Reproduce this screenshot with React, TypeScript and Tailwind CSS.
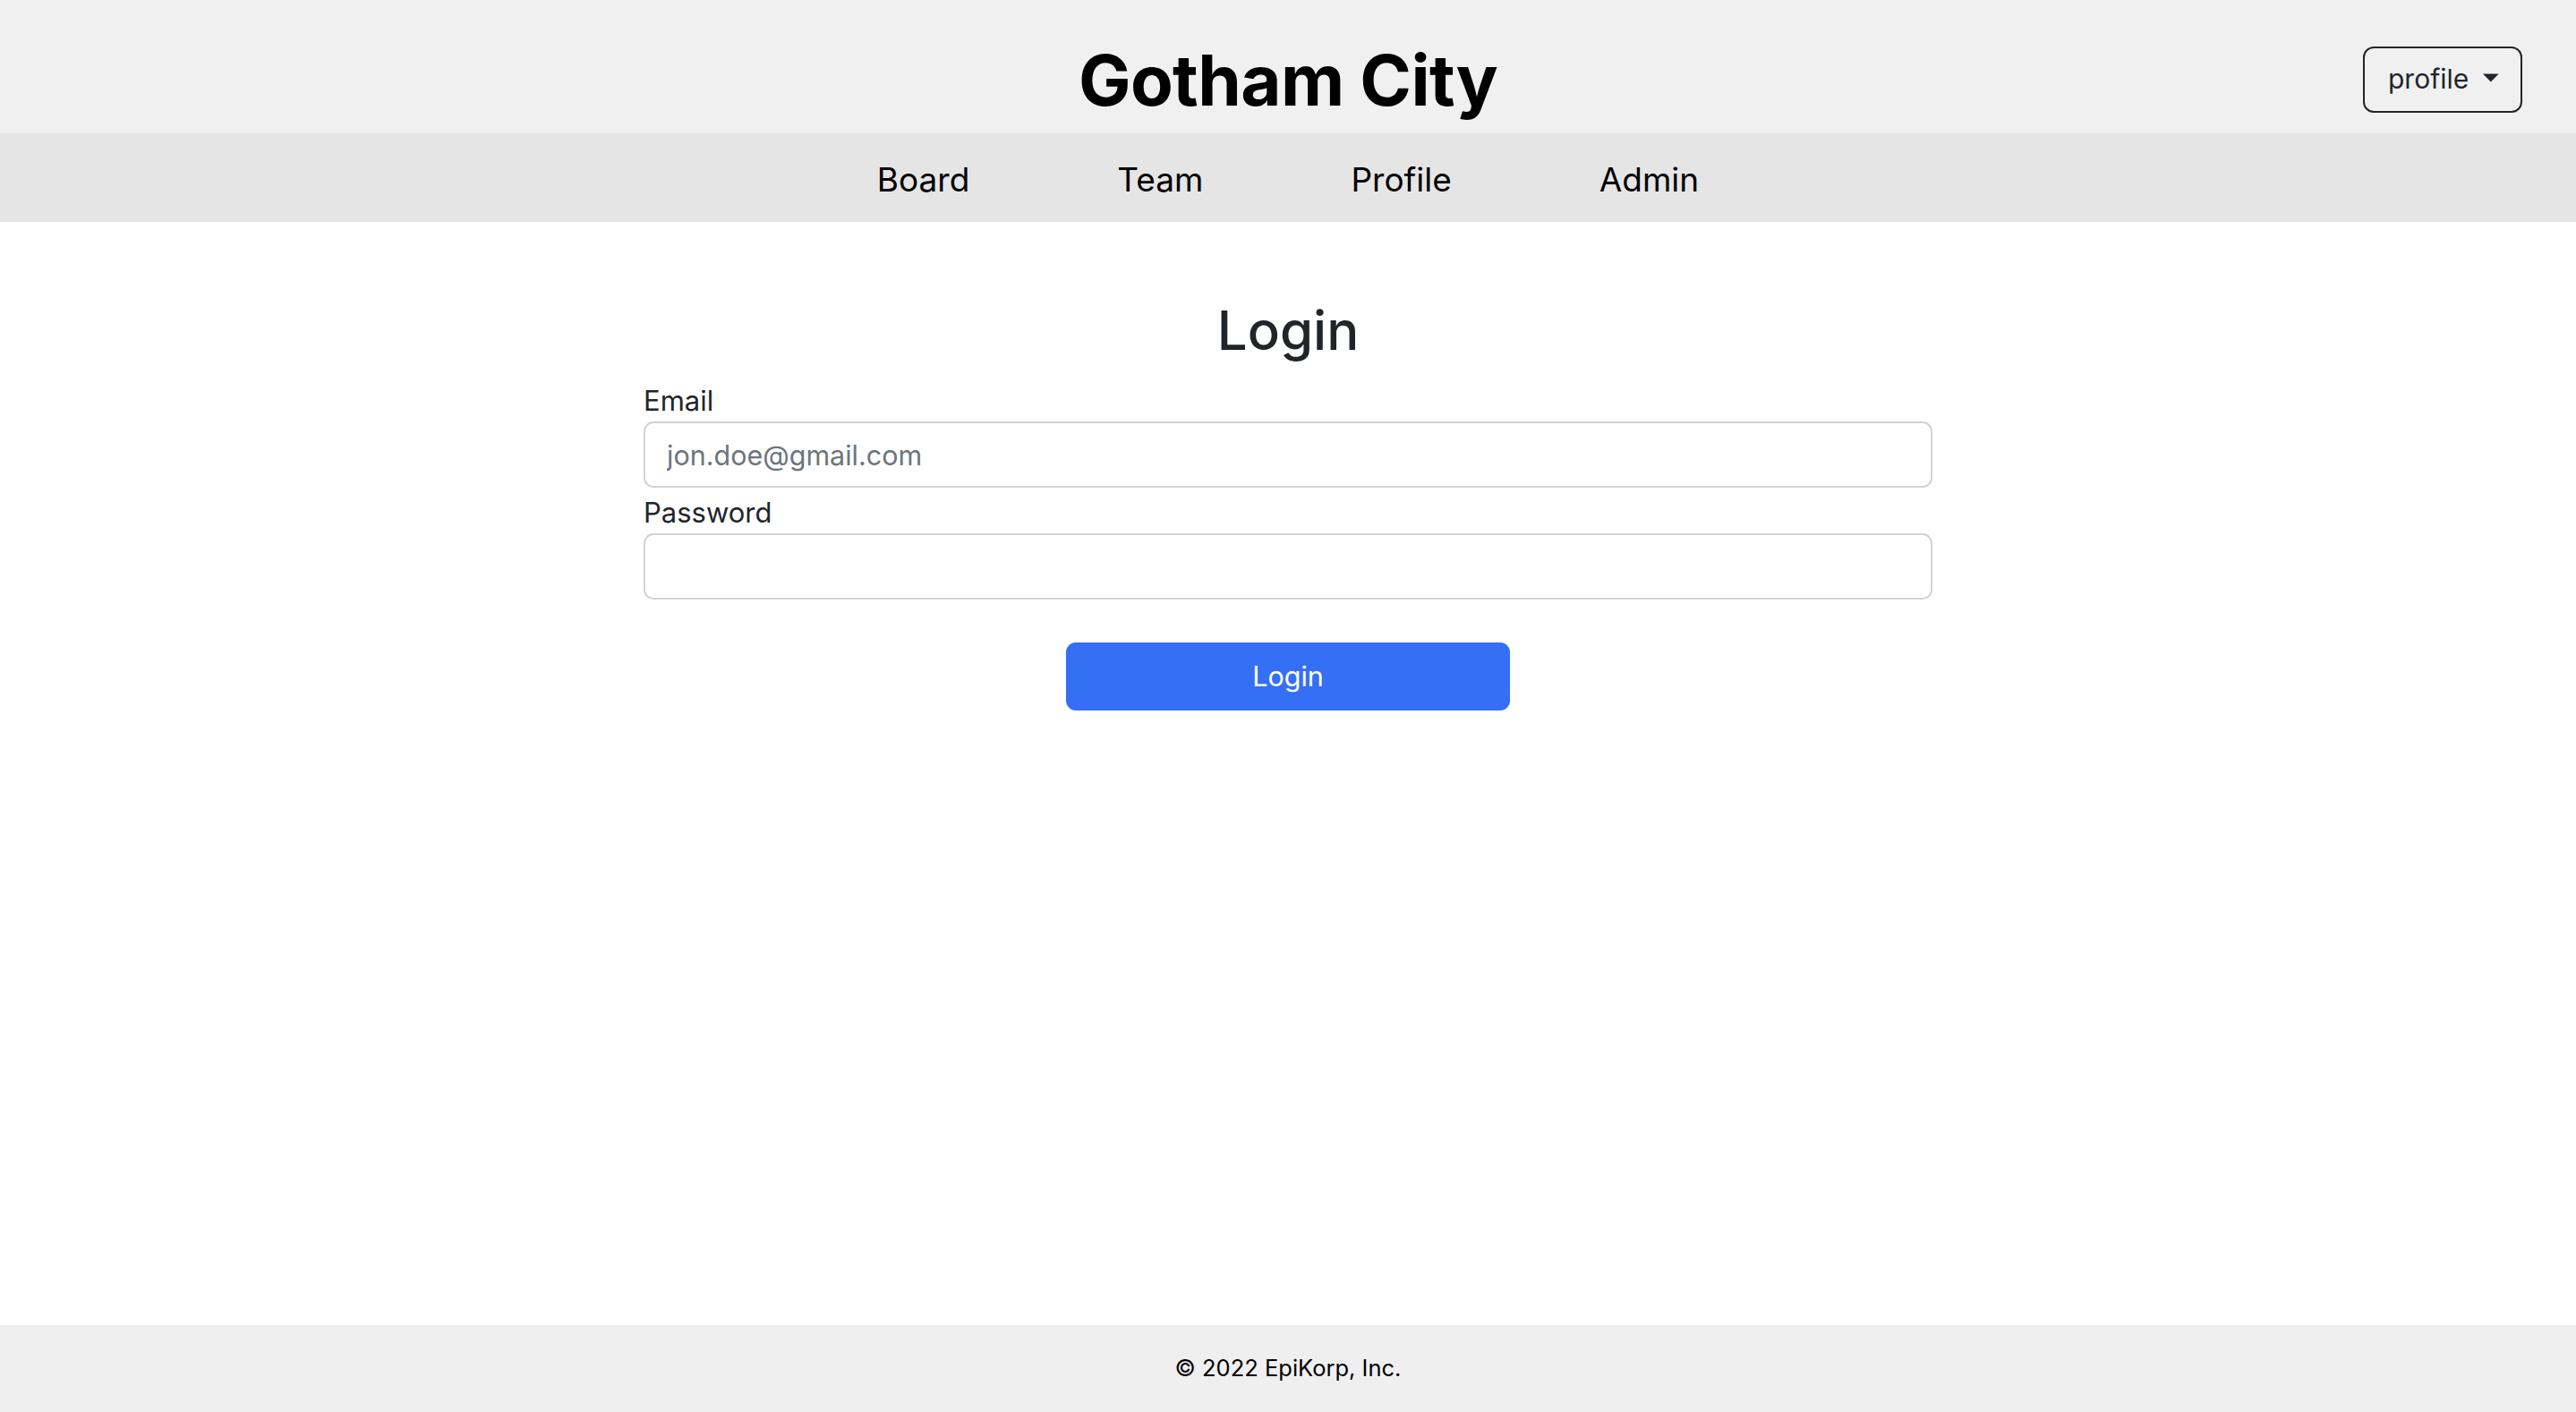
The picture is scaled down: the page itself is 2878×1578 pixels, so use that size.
import React from "react";

export default function App() {
  return (
    <div
      className="flex flex-col min-h-screen h-[1578px] bg-white"
      style={{ fontFamily: "Inter, 'Noto Sans', 'Liberation Sans', sans-serif" }}
    >
      <header className="grid grid-cols-[1fr_auto_1fr] h-[149px] bg-[#f0f0f0] shrink-0">
        <div />
        <h1 className="pt-[49px] text-[78px] leading-[82px] font-bold text-black tracking-[-0.6px]">
          Gotham City
        </h1>
        <div className="flex justify-end items-start pt-[52px] pr-[60px]">
          <button className="flex items-center h-[74px] w-[178px] pl-[26px] pr-[24px] gap-[16px] border-2 border-[#212529] rounded-[12px] text-[30px] text-[#212529] leading-none">
            <span className="pb-[2px]">profile</span>
            <svg width="20" height="10" viewBox="0 0 20 10" className="mb-[4px]">
              <polygon points="0,0 20,0 10,10" fill="#212529" />
            </svg>
          </button>
        </div>
      </header>

      <nav className="flex justify-center items-center gap-[165px] h-[99px] pt-[3px] bg-[#e6e5e6] shrink-0">
        {["Board", "Team", "Profile", "Admin"].map((t) => (
          <a key={t} className="text-[37px] leading-none text-black cursor-pointer">
            {t}
          </a>
        ))}
      </nav>

      <main className="flex-1 flex justify-center pt-[85px]">
        <div className="w-[1440px] flex flex-col">
          <h2 className="text-center text-[60px] leading-[72px] font-medium text-[#212529]">Login</h2>
          <label className="mt-[21px] text-[31px] leading-[43px] text-[#212529]">Email</label>
          <input
            placeholder="jon.doe@gmail.com"
            className="mt-[2px] h-[74px] border-2 border-[#ced4da] rounded-[11px] px-[24px] text-[30.5px] text-[#212529] placeholder:text-[#6c757d] outline-none"
          />
          <label className="mt-[6px] text-[31px] leading-[43px] text-[#212529]">Password</label>
          <input
            type="password"
            className="mt-[2px] h-[74px] border-2 border-[#ced4da] rounded-[11px] px-[24px] text-[30.5px] text-[#212529] outline-none"
          />
          <div className="flex justify-center mt-[48px]">
            <button className="w-[496px] h-[76px] rounded-[11px] bg-[#346ff5] text-white text-[30.5px]">
              Login
            </button>
          </div>
        </div>
      </main>

      <footer className="flex justify-center items-center h-[97px] bg-[#efefef] shrink-0">
        <p className="text-[25.5px] text-black">© 2022 EpiKorp, Inc.</p>
      </footer>
    </div>
  );
}
